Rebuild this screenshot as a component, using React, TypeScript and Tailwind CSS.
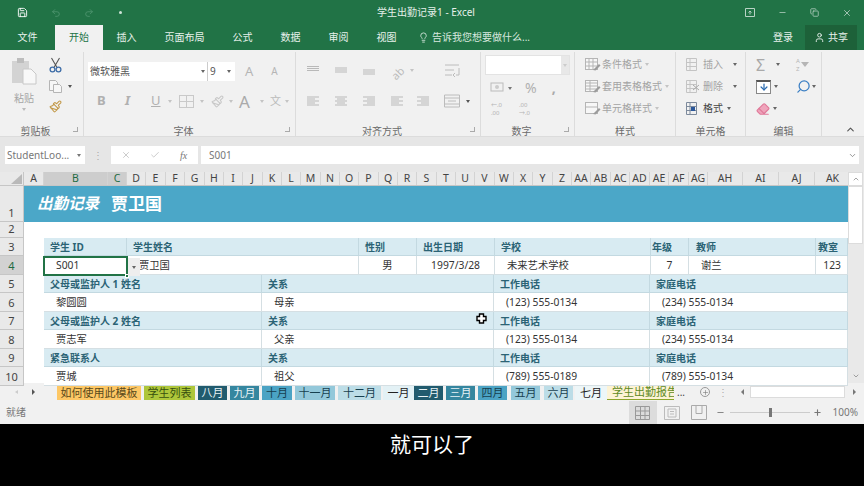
import React from "react";
import { Undo2, Redo2, X, Check, ChevronDown, ChevronUp, Lightbulb, User, Save, Minus, Plus, Search, Paintbrush, Eraser, ArrowDown, Copy } from "lucide-react";

const Caret = ({ c = "border-t-[#777]" }: { c?: string }) => (
  <span className={`inline-block w-0 h-0 border-x-[2px] border-x-transparent border-t-[3px] ${c}`} />
);

const Lines = ({ a = "center" }: { a?: string }) => (
  <svg width="14" height="10" viewBox="0 0 14 10" stroke="#b9b9b9" strokeWidth="1">
    <path d={a === "top" ? "M1 1.5h12M1 3.5h12M1 5.5h12" : a === "mid" ? "M1 3h12M1 5h12M1 7h12" : a === "bot" ? "M1 5h12M1 7h12M1 9h12" : a === "left" ? "M1 1h12M1 3h8M1 5h12M1 7h8M1 9h12" : a === "c" ? "M1 1h12M3 3h8M1 5h12M3 7h8M1 9h12" : "M1 1h12M5 3h8M1 5h12M5 7h8M1 9h12"} />
  </svg>
);

const StyleIcon = ({ k }: { k: number }) => (
  <svg width="18" height="15" viewBox="0 0 18 15" fill="none" stroke="#b5b5b5" strokeWidth="1">
    <rect x="1.5" y="1.5" width="12" height="11" fill="#f7f7f7" />
    {k === 0 && <path d="M5 1.5v11M9 1.5v11M1.5 5h12M1.5 9h12" />}
    {k === 1 && <path d="M1.5 4h12M1.5 7h12M1.5 10h12M6 1.5v11" />}
    {k === 2 && <path d="M1.5 6h12" />}
    <path d="M9 13l6-6 1.5 1.5-5 5z" fill="#9c9c9c" stroke="none" />
  </svg>
);

const CellIcon = ({ k }: { k: number }) => (
  <svg width="15" height="15" viewBox="0 0 15 15" fill="none" stroke={k === 2 ? "#7d8a9c" : "#c4c4c4"} strokeWidth="1">
    <path d="M1.5 1.5h10v12h-10zM1.5 5.5h10M1.5 9.5h10M5 1.5v12" />
    {k === 2 && <rect x="6" y="6" width="4" height="4" fill="#2b579a" stroke="none" />}
    {k === 1 && <path d="M8 6l6 5M14 6l-6 5" stroke="#aaa" />}
  </svg>
);

const columns: [string, string][] = [
  ["A", "w-[20px]"], ["B", "w-[64px]"], ["C", "w-[19px]"], ["D", "w-[19px]"], ["E", "w-[20px]"], ["F", "w-[19px]"], ["G", "w-[20px]"],
  ["H", "w-[19px]"], ["I", "w-[19px]"], ["J", "w-[20px]"], ["K", "w-[19px]"], ["L", "w-[19px]"], ["M", "w-[20px]"], ["N", "w-[19px]"],
  ["O", "w-[19px]"], ["P", "w-[20px]"], ["Q", "w-[19px]"], ["R", "w-[19px]"], ["S", "w-[20px]"], ["T", "w-[19px]"], ["U", "w-[19px]"],
  ["V", "w-[20px]"], ["W", "w-[19px]"], ["X", "w-[19px]"], ["Y", "w-[20px]"], ["Z", "w-[19px]"], ["AA", "w-[19px]"], ["AB", "w-[20px]"],
  ["AC", "w-[19px]"], ["AD", "w-[20px]"], ["AE", "w-[19px]"], ["AF", "w-[20px]"], ["AG", "w-[19px]"], ["AH", "w-[35px]"], ["AI", "w-[36px]"],
  ["AJ", "w-[36px]"], ["AK", "w-[36px]"],
];

const sheetTabs: [string, string, string][] = [
  ["如何使用此模板", "w-[84px] bg-[#fdc765] text-[#5a4a1c]", "mr-[3px]"],
  ["学生列表", "w-[51px] bg-[#aec63a] text-[#37500f]", "mr-[3px]"],
  ["八月", "w-[29px] bg-[#215b6e] text-[#e8f3f6]", "mr-[3px]"],
  ["九月", "w-[29px] bg-[#35869f] text-[#e8f3f6]", "mr-[3px]"],
  ["十月", "w-[30px] bg-[#4ba3c4] text-[#17404f]", "mr-[3px]"],
  ["十一月", "w-[40px] bg-[#93c8da] text-[#17404f]", "mr-[3px]"],
  ["十二月", "w-[43px] bg-[#bcdde7] text-[#17404f]", "mr-[2px]"],
  ["一月", "w-[31px] bg-[#e3f1f5] text-[#222]", ""],
  ["二月", "w-[29px] bg-[#215b6e] text-[#e8f3f6]", "mr-[3px]"],
  ["三月", "w-[29px] bg-[#35869f] text-[#e8f3f6]", "mr-[3px]"],
  ["四月", "w-[29px] bg-[#4ba3c4] text-[#17404f]", "mr-[4px]"],
  ["五月", "w-[29px] bg-[#93c8da] text-[#17404f]", "mr-[4px]"],
  ["六月", "w-[29px] bg-[#bcdde7] text-[#17404f]", "mr-[2px]"],
  ["七月", "w-[32px] bg-[#edf6f8] text-[#222]", ""],
];

const Head = ({ w, children, pl = "pl-[6px]" }: { w: string; children: React.ReactNode; pl?: string }) => (
  <div className={`${w} ${pl} h-full shrink-0 border-r border-[#c3d9e1] pt-[1px] flex items-center text-[10px] font-bold text-[#2b6375] whitespace-pre`}>{children}</div>
);
const Val = ({ w, children, extra = "pl-[12px]" }: { w: string; children: React.ReactNode; extra?: string }) => (
  <div className={`${w} h-full shrink-0 border-r border-[#d5dfe3] pt-[1px] flex items-center text-[10.3px] text-[#333] ${extra}`}>{children}</div>
);

const Row = ({ n, h, active, children }: { n: number; h: string; active?: boolean; children?: React.ReactNode }) => (
  <div className={`flex ${h} shrink-0`}>
    <div className={`w-[24px] shrink-0 flex items-end justify-center text-[11px] leading-[16px] border-b border-r border-[#c6c6c6] ${active ? "bg-[#d2d2d2] text-[#1f6b43]" : "bg-[#e9e9e9] text-[#444]"}`}>{n}</div>
    <div className="flex-1 min-w-0">{children}</div>
  </div>
);

const TableRow = ({ head, children }: { head?: boolean; children: React.ReactNode }) => (
  <div className="flex h-full pl-[20px]">
    <div className={`flex flex-1 h-full border-b ${head ? "bg-[#d8ebf2] border-[#c3d9e1]" : "bg-white border-[#d5dfe3]"}`}>{children}</div>
  </div>
);

const Group = ({ w, label, launcher, children }: { w: string; label: string; launcher?: boolean; children: React.ReactNode }) => (
  <div className={`${w} shrink-0 h-full border-r border-[#dcdcdc] flex flex-col relative`}>
    <div className="h-[70px] shrink-0">{children}</div>
    <div className={`flex-1 flex items-center justify-center text-[10px] text-[#6a6a6a] pt-[2px] ${launcher ? "pr-[12px]" : ""}`}>{label}</div>
    {launcher && <span className="absolute right-[5px] bottom-[4px] w-[5px] h-[5px] border-r border-b border-[#aaa]" />}
  </div>
);

export default function App() {
  return (
    <div className="w-[864px] h-[486px] bg-black overflow-hidden flex flex-col font-['Noto_Sans','Noto_Sans_CJK_SC',sans-serif]">
      {/* title bar */}
      <div className="h-[25px] shrink-0 bg-[#217346] flex items-center text-[#e6f0ea]">
        <div className="flex items-center flex-1 basis-0">
          <Save size={11} className="ml-[17px] text-white" />
          <Undo2 size={10} className="ml-[23px] text-[#4f9570]" />
          <Redo2 size={10} className="ml-[23px] text-[#4f9570]" />
          <span className="ml-[25px] w-[3px] h-[3px] rounded-full bg-[#cfe3d8]" />
        </div>
        <div className="text-center text-[10px]">学生出勤记录1 - Excel</div>
        <div className="flex items-center justify-end flex-1 basis-0 gap-[23px] pr-[12px] text-[#b9d3c5]">
          <svg width="10" height="9" viewBox="0 0 10 9" fill="none" stroke="currentColor"><path d="M.5.5h9v8h-9zM5 6.5V3M3.5 4.5 5 3l1.5 1.5" /></svg>
          <Minus size={9} />
          <Copy size={9} />
          <X size={10} />
        </div>
      </div>
      {/* menu tabs */}
      <div className="h-[25px] shrink-0 bg-[#217346] flex items-end text-[10px] text-[#e8f1ec]">
        <div className="w-[55px] h-full flex items-center justify-center">文件</div>
        <div className="w-[48px] h-full bg-[#f1f1f1] text-[#217346] flex items-center justify-center">开始</div>
        <div className="w-[47px] h-full flex items-center justify-center">插入</div>
        <div className="w-[69px] h-full flex items-center justify-center">页面布局</div>
        <div className="w-[47px] h-full flex items-center justify-center">公式</div>
        <div className="w-[49px] h-full flex items-center justify-center">数据</div>
        <div className="w-[47px] h-full flex items-center justify-center">审阅</div>
        <div className="w-[49px] h-full flex items-center justify-center">视图</div>
        <div className="h-full flex items-center pl-[7px] gap-[3px] flex-1">
          <Lightbulb size={11} className="text-[#cfe3d8]" />
          <span className="text-[#d8e8df]">告诉我您想要做什么...</span>
        </div>
        <div className="h-full flex items-center pr-[12px]">登录</div>
        <div className="w-[52px] h-full bg-[#1d6139] flex items-center justify-center gap-[3px] mr-[7px]">
          <User size={11} />共享
        </div>
      </div>
      {/* ribbon */}
      <div className="h-[86px] shrink-0 bg-[#f1f1f1] flex pt-[2px] relative text-[#a6a6a6]">
        <Group w="w-[84px]" label="剪贴板" launcher>
          <div className="flex h-full">
            <div className="w-[48px] flex flex-col items-center pt-[6px]">
              <svg width="26" height="27" viewBox="0 0 26 27">
                <rect x="1" y="3" width="17" height="22" fill="#d3d3d3" />
                <rect x="6" y="0" width="7" height="5" fill="#bdbdbd" />
                <path d="M12 11h8l5 5v10H12z" fill="#f8f8f8" stroke="#c8c8c8" />
              </svg>
              <span className="text-[10px] mt-[7px] leading-[13px]">粘贴</span>
              <span className="mt-[3px] leading-[0] flex"><Caret c="border-t-[#bbb]" /></span>
            </div>
            <div className="flex flex-col items-start pt-[5px] gap-[6px]">
              <svg width="15" height="16" viewBox="0 0 15 16" fill="none" stroke="#555"><path d="M3.5 1 9 10.5M11.5 1 6 10.5" strokeWidth="1.1" /><circle cx="4.5" cy="12.5" r="2.4" stroke="#3f6ea8" strokeWidth="1.3" /><circle cx="10.5" cy="12.5" r="2.4" stroke="#3f6ea8" strokeWidth="1.3" /></svg>
              <div className="flex items-center gap-[5px]">
                <svg width="15" height="15" viewBox="0 0 15 15" fill="#f7f7f7" stroke="#b5b5b5"><path d="M1.5 1.5h6l2 2v8h-8z" /><path d="M5.5 5.5h6l2 2v6h-8z" /></svg>
                <Caret c="border-t-[#555]" />
              </div>
              <Paintbrush size={13} className="text-[#c39a4a] ml-[1px]" />
            </div>
          </div>
        </Group>
        <Group w="w-[212px]" label="字体" launcher>
          <div className="pl-[4px] pt-[10px]">
            <div className="flex items-center h-[19px]">
              <div className="w-[119px] h-full bg-white flex items-center justify-between px-[2px] text-[10px] text-[#555]">微软雅黑<Caret c="border-t-[#666]" /></div>
              <div className="w-[28px] h-full bg-white border-l border-[#ccc] flex items-center justify-between px-[2px] text-[10px] text-[#555]">9<span className="mr-[2px] flex"><Caret c="border-t-[#666]" /></span></div>
              <span className="ml-[10px] text-[13px] text-[#b5b5b5]">A</span>
              <span className="ml-[18px] text-[10px] text-[#b5b5b5]">A</span>
            </div>
            <div className="flex items-center h-[22px] mt-[9px] pl-[9px] text-[#b0b0b0]">
              <span className="w-[28px] text-[13px] font-bold">B</span>
              <span className="w-[26px] text-[13px] italic font-bold">I</span>
              <span className="w-[17px] text-[13px] underline">U</span>
              <span className="w-[11px] flex"><Caret c="border-t-[#c4c4c4]" /></span>
              <span className="w-[15px] h-[13px] border border-[#c9c9c9] bg-[linear-gradient(#c9c9c9,#c9c9c9),linear-gradient(#c9c9c9,#c9c9c9)] bg-[length:100%_1px,1px_100%] bg-center bg-no-repeat" />
              <span className="w-[15px] flex justify-center"><Caret c="border-t-[#c4c4c4]" /></span>
              <Paintbrush size={13} className="text-[#c8c8c8] ml-[2px]" />
              <span className="w-[14px] flex justify-center"><Caret c="border-t-[#c4c4c4]" /></span>
              <span className="w-[15px] text-[17px] leading-none text-[#aaa] ml-[1px]">A</span>
              <span className="w-[15px] flex justify-center"><Caret c="border-t-[#c4c4c4]" /></span>
              <span className="w-[13px] text-[11px] text-[#bbb] ml-[1px]">文</span>
              <span className="w-[8px] flex justify-center"><Caret c="border-t-[#c4c4c4]" /></span>
            </div>
          </div>
        </Group>
        <Group w="w-[185px]" label="对齐方式" launcher>
          <div className="pl-[10px] pt-[11px]">
            <div className="flex items-center h-[14px]">
              <span className="w-[28px] flex"><Lines a="top" /></span>
              <span className="w-[28px] flex"><Lines a="mid" /></span>
              <span className="w-[28px] flex"><Lines a="bot" /></span>
              <span className="w-[20px] text-[11px] text-[#bbb] leading-none -rotate-45">ab</span>
              <span className="w-[34px] flex"><Caret c="border-t-[#c4c4c4]" /></span>
              <svg width="17" height="15" viewBox="0 0 17 15" fill="none" stroke="#bcbcbc"><path d="M1 2h14M1 7h9M1 12h7M12 12h3V5" /><path d="M11 10l-2 2 2 2" /></svg>
            </div>
            <div className="flex items-center h-[14px] mt-[17px]">
              <span className="w-[28px] flex"><Lines a="left" /></span>
              <span className="w-[28px] flex"><Lines a="c" /></span>
              <span className="w-[28px] flex"><Lines a="right" /></span>
              <span className="w-[26px] flex"><Lines a="left" /></span>
              <span className="w-[28px] flex"><Lines a="right" /></span>
              <svg width="16" height="14" viewBox="0 0 16 14" fill="none" stroke="#bcbcbc"><path d="M.5 1h15v12H.5zM.5 4h15M.5 10h15M4 7h8" /></svg>
              <span className="ml-[6px] flex"><Caret c="border-t-[#555]" /></span>
            </div>
          </div>
        </Group>
        <Group w="w-[94px]" label="数字" launcher>
          <div className="pl-[4px] pt-[3px]">
            <div className="w-[85px] h-[20px] bg-white border border-[#e3e3e3] flex justify-end"><div className="w-[8px] bg-[#e8e8e8] flex items-center justify-center"><Caret c="border-t-[#ccc]" /></div></div>
            <div className="flex items-center h-[20px] mt-[3px] pl-[5px]">
              <svg width="15" height="12" viewBox="0 0 15 12"><rect x="1" y="1" width="12" height="8" fill="none" stroke="#bbb" /><circle cx="7" cy="5" r="2" fill="#ccc" /></svg>
              <span className="ml-[3px] w-[17px] flex"><Caret c="border-t-[#777]" /></span>
              <span className="text-[14px] leading-none text-[#b0b0b0]">%</span>
              <span className="ml-[15px] text-[14px] font-bold text-[#aaa] leading-none">,</span>
            </div>
            <div className="flex h-[18px] mt-[3px] pl-[6px] text-[6px] leading-[8px] text-[#b3b3b3]">
              <span className="w-[28px]">←.0<br />.00</span>
              <span>.00<br />→.0</span>
            </div>
          </div>
        </Group>
        <Group w="w-[101px]" label="样式">
          <div className="pl-[9px] pt-[3px] flex flex-col gap-[3px] text-[10px] text-[#a3a3a3]">
            <div className="flex items-center h-[19px]"><StyleIcon k={0} /><span className="mr-[3px]">条件格式</span><Caret c="border-t-[#c4c4c4]" /></div>
            <div className="flex items-center h-[19px]"><StyleIcon k={1} /><span className="mr-[3px]">套用表格格式</span><Caret c="border-t-[#c4c4c4]" /></div>
            <div className="flex items-center h-[19px]"><StyleIcon k={2} /><span className="mr-[3px]">单元格样式</span><Caret c="border-t-[#c4c4c4]" /></div>
          </div>
        </Group>
        <Group w="w-[70px]" label="单元格">
          <div className="pl-[9px] pt-[3px] flex flex-col gap-[3px] text-[10px] text-[#a3a3a3]">
            <div className="flex items-center h-[19px]"><CellIcon k={0} /><span className="ml-[3px] w-[30px]">插入</span><Caret c="border-t-[#666]" /></div>
            <div className="flex items-center h-[19px]"><CellIcon k={1} /><span className="ml-[3px] w-[30px]">删除</span><Caret c="border-t-[#666]" /></div>
            <div className="flex items-center h-[19px] text-[#444]"><CellIcon k={2} /><span className="ml-[3px] w-[24px]">格式</span><Caret c="border-t-[#666]" /></div>
          </div>
        </Group>
        <Group w="w-[76px]" label="编辑">
          <div className="pl-[10px] pt-[3px] flex flex-col gap-[3px]">
            <div className="flex items-center h-[19px]">
              <span className="text-[16px] leading-none text-[#a9a9a9] w-[20px]">Σ</span><Caret c="border-t-[#666]" />
              <span className="ml-[16px] text-[6px] leading-[8px] text-[#b5b5b5]">A<br />Z</span><span className="ml-[1px] w-0 h-0 border-x-[4px] border-x-transparent border-t-[5px] border-t-[#b5b5b5]" />
            </div>
            <div className="flex items-center h-[19px]">
              <span className="w-[15px] h-[14px] bg-white border border-[#888] border-t-[2px] border-t-[#555] flex items-center justify-center"><ArrowDown size={10} strokeWidth={3} className="text-[#2b6cb0]" /></span>
              <span className="ml-[3px] flex"><Caret c="border-t-[#666]" /></span>
              <Search size={15} className="ml-[18px] -scale-x-100 text-[#3b7fc4]" />
              <span className="ml-[1px] flex"><Caret c="border-t-[#666]" /></span>
            </div>
            <div className="flex items-center h-[19px]">
              <Eraser size={14} className="text-[#e07a9a]" fill="#efa4bb" />
              <span className="ml-[3px] flex"><Caret c="border-t-[#666]" /></span>
            </div>
          </div>
        </Group>
        <ChevronUp size={11} strokeWidth={2.5} className="absolute right-[8px] bottom-[1px] text-[#555]" />
      </div>
      {/* formula bar */}
      <div className="h-[36px] shrink-0 bg-[#e6e6e6] flex items-center px-[5px] pb-[2px] pt-[3px] border-t border-[#dcdcdc]">
        <div className="w-[80px] h-[18px] bg-white flex items-center justify-between pl-[2px] pr-[4px] text-[10px] text-[#777]">StudentLoo...<Caret c="border-t-[#777]" /></div>
        <div className="w-[26px] text-center text-[#aaa] text-[10px] leading-none">⋮</div>
        <div className="w-[87px] h-[18px] bg-white flex items-center text-[#c2c2c2]">
          <X size={10} className="ml-[10px]" />
          <Check size={10} className="ml-[19px]" />
          <span className="ml-[20px] text-[10px] italic font-['Liberation_Serif',serif] text-[#777]">fx</span>
        </div>
        <div className="ml-[3px] flex-1 h-[18px] bg-white flex items-center justify-between pl-[8px] pr-[2px] text-[10px] text-[#777]">S001<ChevronDown size={9} /></div>
      </div>
      {/* grid */}
      <div className="h-[211px] shrink-0 flex relative bg-white">
        <div className="w-[848px] shrink-0 flex flex-col">
          <div className="h-[14px] shrink-0 flex bg-[#e9e9e9] border-b border-[#c6c6c6] text-[10.5px] text-[#444]">
            <div className="w-[24px] shrink-0 border-r border-[#c6c6c6] relative overflow-hidden">
              <span className="absolute right-[1px] bottom-[1px] w-0 h-0 border-l-[11px] border-l-transparent border-b-[10px] border-b-[#b9b9b9]" />
            </div>
            {columns.map(([l, w]) => (
              <div key={l} className={`${w} shrink-0 flex items-center justify-center border-r border-[#d3d3d3] ${l === "B" || l === "C" ? "bg-[#cdcdcd] text-[#1f6b43]" : ""}`}>{l}</div>
            ))}
          </div>
          <Row n={1} h="h-[36px]">
            <div className="h-full bg-[#4ba7c8] flex items-center pl-[13px] text-white font-bold">
              <span className="text-[15.5px] italic">出勤记录</span>
              <span className="text-[17px] ml-[12px]">贾卫国</span>
            </div>
          </Row>
          <Row n={2} h="h-[16px]" />
          <Row n={3} h="h-[18px]">
            <TableRow head>
              <Head w="w-[83px]">学生 ID</Head><Head w="w-[232px]">学生姓名</Head><Head w="w-[58px]">性别</Head><Head w="w-[78px]">出生日期</Head>
              <Head w="w-[156px]">学校</Head><Head w="w-[38px]" pl="pl-[1px]">年级</Head><Head w="w-[127px]" pl="pl-[7px]">教师</Head><Head w="w-[32px]" pl="pl-[2px]">教室</Head>
            </TableRow>
          </Row>
          <Row n={4} h="h-[19px]" active>
            <TableRow>
              <Val w="w-[83px]">S001</Val><Val w="w-[232px]" extra="pl-[12px]">贾卫国</Val><Val w="w-[58px]" extra="justify-center">男</Val><Val w="w-[78px]" extra="justify-end pr-[14px]">1997/3/28</Val>
              <Val w="w-[156px]">未来艺术学校</Val><Val w="w-[38px]" extra="justify-center">7</Val><Val w="w-[127px]" extra="pl-[12px]">谢兰</Val><Val w="w-[32px]" extra="justify-end pr-[6px]">123</Val>
            </TableRow>
          </Row>
          {[
            [5, "父母或监护人 1 姓名", "黎圆圆", "母亲", "(123) 555-0134", "(234) 555-0134"],
            [7, "父母或监护人 2 姓名", "贾志军", "父亲", "(123) 555-0134", "(234) 555-0134"],
            [9, "紧急联系人", "贾城", "祖父", "(789) 555-0189", "(789) 555-0134"],
          ].map((r) => (
            <React.Fragment key={r[0] as number}>
              <Row n={r[0] as number} h="h-[18px]">
                <TableRow head>
                  <Head w="w-[218px]">{r[1]}</Head><Head w="w-[232px]">关系</Head><Head w="w-[156px]">工作电话</Head><Head w="w-[198px]">家庭电话</Head>
                </TableRow>
              </Row>
              <Row n={(r[0] as number) + 1} h="h-[19px]">
                <TableRow>
                  <Val w="w-[218px]">{r[2]}</Val><Val w="w-[232px]">{r[3]}</Val><Val w="w-[156px]">{r[4]}</Val><Val w="w-[198px]">{r[5]}</Val>
                </TableRow>
              </Row>
            </React.Fragment>
          ))}
        </div>
        {/* vertical scrollbar */}
        <div className="flex-1 bg-[#e9e9e9] flex flex-col items-center pr-[1px]">
          <div className="w-full h-[14px] bg-white border border-[#dcdcdc] flex items-center justify-center"><ChevronUp size={8} className="text-[#777]" /></div>
          <div className="w-full h-[58px] bg-white border border-[#dcdcdc]" />
          <div className="flex-1" />
          <div className="w-full h-[14px] flex items-center justify-center"><ChevronDown size={8} className="text-[#777]" /></div>
        </div>
        {/* selection overlay */}
        <div className="absolute left-[43px] top-[84px] w-[85px] h-[20px] border-2 border-[#217346]" />
        <div className="absolute left-[125px] top-[102px] w-[4px] h-[4px] bg-[#217346] border border-white" />
        <div className="absolute left-[128px] top-[86px] w-[12px] h-[18px] bg-[#eeeeee] flex items-center justify-center"><Caret c="border-t-[#666]" /></div>
        {/* cursor */}
        <svg className="absolute left-[476px] top-[141px]" width="11" height="11" viewBox="0 0 11 11"><path d="M3.5 1h4v2.5H10v4H7.5V10h-4V7.5H1v-4h2.5z" fill="#fff" stroke="#000" strokeWidth="1.4" /></svg>
      </div>
      {/* sheet tabs */}
      <div className="h-[18px] shrink-0 bg-[#f1f1f1] flex items-center text-[11px] leading-none">
        <div className="w-[57px] shrink-0 flex items-center pl-[15px] gap-[14px]">
          <span className="w-0 h-0 border-y-[2px] border-y-transparent border-r-[3px] border-r-[#ccc]" />
          <span className="w-0 h-0 border-y-[3px] border-y-transparent border-l-[3px] border-l-[#555]" />
        </div>
        {sheetTabs.map(([t, c, m]) => (
          <div key={t} className={`${c} ${m} h-[15px] shrink-0 flex items-center justify-center`}>{t}</div>
        ))}
        <div className="w-[67px] h-[15px] shrink-0 bg-[#fdf3d5] border-b border-[#8da52a] text-[#5f8a1e] overflow-hidden whitespace-nowrap pl-[5px] flex items-center">学生出勤报告</div>
        <span className="ml-[3px] w-[12px] text-[#444] text-[10px]">...</span>
        <span className="ml-[11px] w-[10px] h-[10px] rounded-full border border-[#999] flex items-center justify-center"><Plus size={7} className="text-[#777]" /></span>
        <span className="ml-[8px] text-[#aaa] text-[10px]">⋮</span>
        <span className="ml-[13px] w-0 h-0 border-y-[3px] border-y-transparent border-r-[3px] border-r-[#777]" />
        <div className="ml-[6px] w-[95px] h-[12px] bg-white border border-[#dcdcdc]" />
        <span className="ml-[8px] w-0 h-0 border-y-[3px] border-y-transparent border-l-[3px] border-l-[#777]" />
      </div>
      {/* status bar */}
      <div className="h-[23px] shrink-0 bg-[#f1f1f1] flex items-center text-[10px] text-[#777]">
        <span className="pl-[6px] flex-1">就绪</span>
        <div className="w-[28px] h-full bg-[#dcdcdc] flex items-center justify-center">
          <svg width="15" height="14" viewBox="0 0 15 14" fill="none" stroke="#999"><path d="M.5.5h14v13H.5zM5.5.5v13M10 .5v13M.5 5h14M.5 9.5h14" /></svg>
        </div>
        <svg className="ml-[7px]" width="16" height="14" viewBox="0 0 16 14" fill="none" stroke="#bbb"><path d="M.5.5h15v13H.5zM4 3h8v8H4zM6 5.5h4M6 8h4" /></svg>
        <svg className="ml-[11px]" width="16" height="15" viewBox="0 0 16 15" fill="none" stroke="#aaa"><path d="M.5.5h15v14H.5zM5 .5v8h6v-8" /></svg>
        <Minus size={9} strokeWidth={3} className="ml-[9px] text-[#888]" />
        <div className="ml-[5px] w-[80px] h-px bg-[#ccc] relative">
          <span className="absolute left-[39px] -top-[4px] w-[3px] h-[9px] bg-[#777]" />
        </div>
        <Plus size={9} strokeWidth={3} className="ml-[3px] text-[#777]" />
        <span className="ml-[11px] pr-[6px]">100%</span>
      </div>
      {/* subtitle */}
      <div className="flex-1 bg-black flex items-center justify-center text-white text-[21px] pb-[20px]">就可以了</div>
    </div>
  );
}
